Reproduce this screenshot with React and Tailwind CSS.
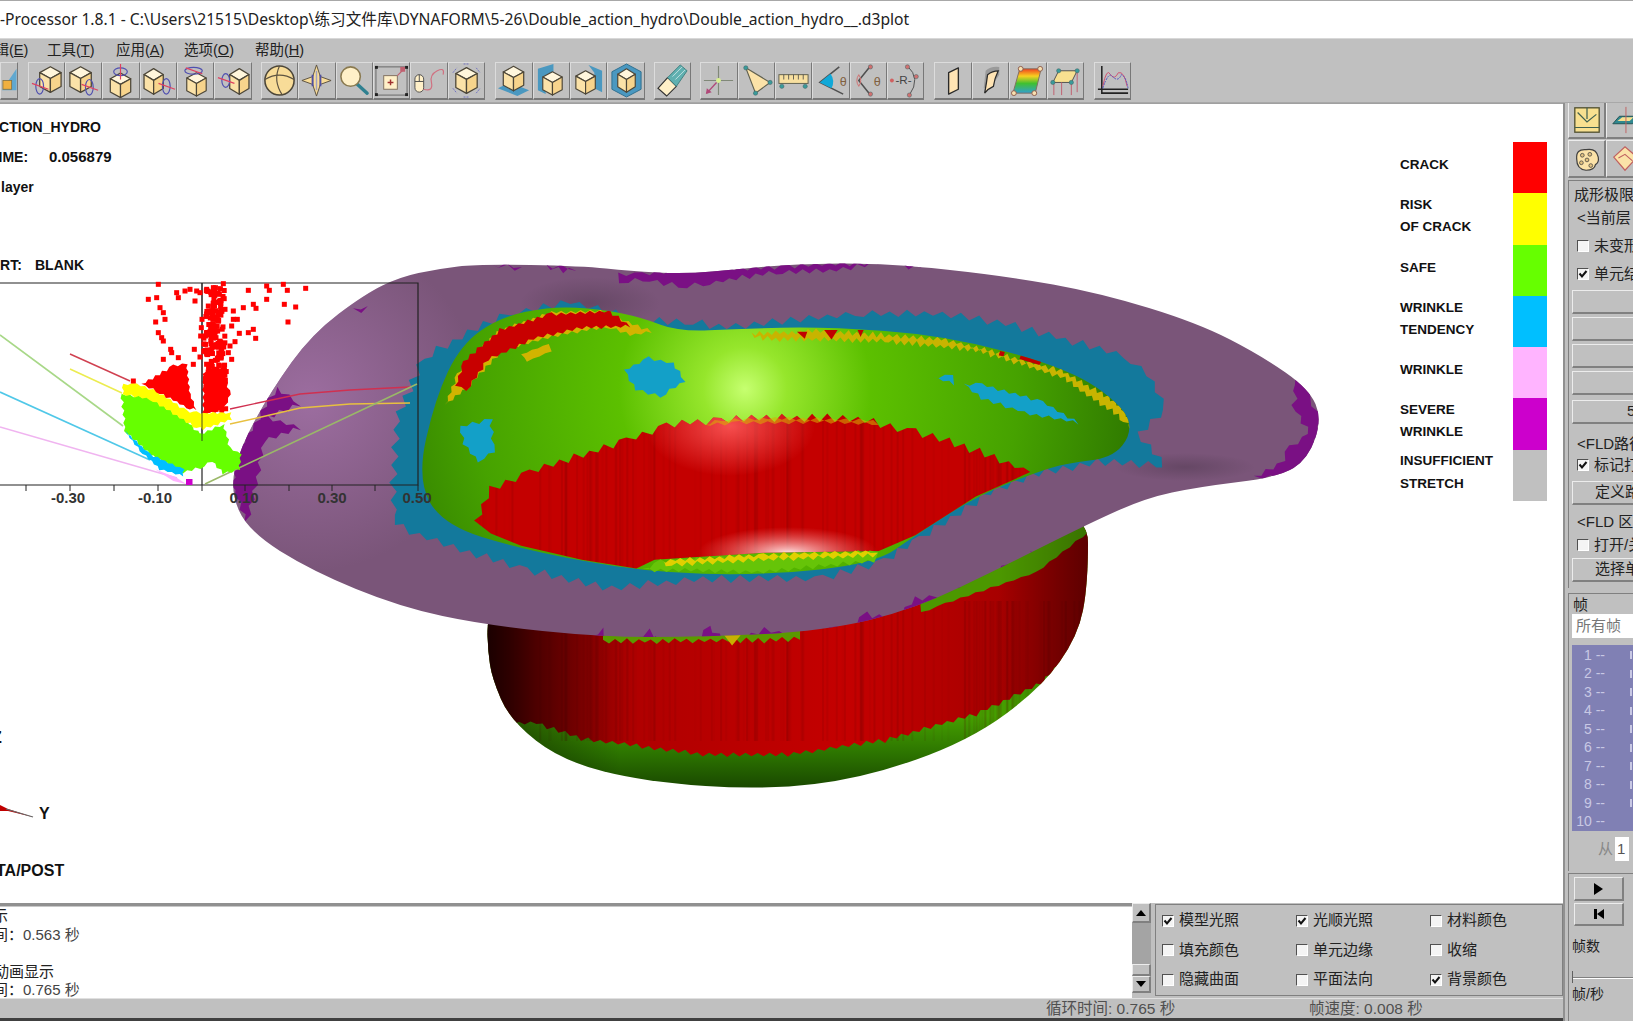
import React from "react"

// zoom crop coordinates -> page coordinates
const z = (pts) => pts.map(([x, y]) => [400 + x / 1.65, 250 + y / 2.85])
const c = (pts) => pts.map(([x, y]) => [x / 3, 100 + y / 3])

const rng = (seed) => {
  let s = seed
  return () => {
    s = (s * 16807) % 2147483647
    return (s - 1) / 2147483646
  }
}

const poly = (pts) =>
  "M" + pts.map((p) => p[0].toFixed(1) + " " + p[1].toFixed(1)).join("L") + "Z"

// rounded closed outline
const smooth = (pts) => {
  const mid = (a, b) => [(a[0] + b[0]) / 2, (a[1] + b[1]) / 2]
  let d = "M" + mid(pts[pts.length - 1], pts[0]).map((n) => n.toFixed(1)).join(" ")
  pts.forEach((p, i) => {
    const m = mid(p, pts[(i + 1) % pts.length])
    d += `Q${p[0].toFixed(1)} ${p[1].toFixed(1)} ${m[0].toFixed(1)} ${m[1].toFixed(1)}`
  })
  return d + "Z"
}

// saw-tooth the edges of a polygon
const jag = (pts, amp, step, seed = 7, open = false) => {
  const r = rng(seed)
  const out = []
  const n = open ? pts.length - 1 : pts.length
  for (let i = 0; i < n; i++) {
    const a = pts[i]
    const b = pts[(i + 1) % pts.length]
    const len = Math.hypot(b[0] - a[0], b[1] - a[1])
    const count = Math.max(1, Math.round(len / step))
    const nx = -(b[1] - a[1]) / len
    const ny = (b[0] - a[0]) / len
    for (let k = 0; k < count; k++) {
      const t = k / count
      const o = (k % 2 ? 1 : -1) * amp * (0.4 + r() * 0.6)
      out.push([a[0] + (b[0] - a[0]) * t + nx * o, a[1] + (b[1] - a[1]) * t + ny * o])
    }
  }
  if (open) out.push(pts[pts.length - 1])
  return out
}

const brimPts = [
  [400, 276], [437, 268], [479, 263], [582, 265], [630, 270], [685, 273], [740, 268], [794, 263],
  [885, 262], [1006, 275], [1100, 292], [1198, 322], [1262, 355], [1309, 388], [1322, 418],
  [1308, 458], [1279, 476], [1198, 486], [1146, 497], [1090, 522], [1006, 564], [915, 608],
  [824, 630], [703, 636], [600, 636], [485, 624], [400, 606], [312, 570], [248, 530], [230, 489],
  [240, 447], [271, 390], [312, 333], [365, 293],
]

const blueBand = [
  [423, 357], [396, 420], [392, 517], [402, 527], [436, 541], [527, 569], [612, 587],
  [703, 578], [824, 578], [885, 559], [921, 538], [982, 496], [1030, 475], [1097, 460],
  [1165, 464], [1139, 432], [1165, 408], [1148, 373], [1124, 355], [1006, 322], [933, 312],
  [855, 313], [727, 326], [685, 320], [642, 319], [570, 301], [509, 312], [461, 336],
]

const bowl = z([
  [250, 158], [330, 165], [400, 190], [460, 230], [560, 222], [700, 216], [900, 240],
  [1105, 335], [1195, 445], [1208, 520], [1175, 590], [1100, 605], [1050, 630], [950, 700],
  [850, 810], [785, 890], [600, 925], [400, 915], [200, 850], [70, 780], [28, 650],
  [58, 420], [100, 268], [165, 188],
])

const redTop = jag(z([[125, 770], [150, 680], [215, 630], [375, 540], [440, 495], [530, 482], [630, 476], [730, 476], [780, 488], [850, 515], [905, 540], [1040, 630]]), 4.5, 8, 11, true)
const redBowl = [...redTop, ...z([[950, 700], [850, 810], [790, 855], [600, 860], [420, 880], [390, 905], [300, 880], [200, 840], [150, 805]])]

const bodyPts = [
  [487, 620], [488, 650], [492, 677], [510, 719], [562, 760], [646, 781], [765, 789], [864, 777],
  [969, 740], [1041, 687], [1078, 635], [1088, 583], [1088, 500], [900, 500], [500, 560],
]
const wallRed = [
  ...z([[100, 900], [1140, 700], [1140, 1100]]),
  ...jag(z([[1130, 1100], [1060, 1230], [950, 1320], [800, 1395], [640, 1435], [500, 1435], [300, 1390], [225, 1345], [100, 1345]]), 2.5, 6, 5, true),
]

const toothRow = jag(z([[335, 1112], [660, 1108]]), 3.5, 6, 3, true)

const purple = [
  z([[360, 65], [400, 65], [470, 50], [540, 50], [640, 45], [730, 35], [790, 35], [720, 55], [620, 60], [500, 95], [460, 100], [400, 80], [365, 90]]),
  z([[150, 40], [200, 42], [190, 50]]),
  z([[240, 40], [290, 50], [270, 60]]),
  z([[830, 40], [860, 42], [840, 50]]),
  z([[1470, 335], [1495, 360], [1500, 420], [1518, 480], [1510, 560], [1490, 620], [1450, 645], [1410, 645], [1450, 610], [1470, 560], [1500, 520], [1475, 440], [1480, 380]]),
  // lower edge clumps
  z([[318, 1100], [332, 1078], [345, 1105]]),
  z([[390, 1105], [410, 1082], [432, 1105]]),
  z([[488, 1108], [510, 1072], [532, 1108]]),
  z([[560, 1104], [600, 1080], [650, 1096]]),
  z([[690, 1090], [720, 1075], [735, 1085]]),
  z([[740, 1078], [770, 1035], [800, 1045], [790, 1066]]),
  z([[820, 1046], [850, 990], [885, 985], [865, 1030]]),
  z([[920, 962], [945, 945], [940, 968]]),
  z([[975, 930], [1005, 890], [1000, 915]]),
  z([[1040, 860], [1065, 850], [1050, 868]]),
  c([[830, 860], [900, 910], [800, 950], [900, 980], [790, 1020], [770, 1150], [740, 1260], [695, 1150], [720, 1040]]),
  c([[1060, 625], [1100, 612], [1085, 630]]),
]

const bluePatches = [
  z([[370, 340], [410, 305], [450, 320], [470, 370], [430, 415], [390, 395]]),
  z([[100, 500], [150, 480], [155, 570], [130, 600], [105, 550]]),
  z([[930, 380], [960, 380], [1060, 430], [1120, 490], [1040, 465], [960, 420]]),
  z([[878, 360], [910, 355], [915, 378]]),
]

const scatter = [
  [475, 550], [445, 595], [470, 590], [530, 575], [535, 590], [555, 570], [570, 565], [590, 570], [585, 600], [600, 575],
  [620, 565], [640, 560], [670, 548], [745, 568], [800, 555], [808, 568], [850, 550], [862, 568], [917, 562], [800, 595],
  [730, 620], [760, 610], [768, 622], [700, 630], [853, 610], [887, 618], [864, 663], [480, 620], [490, 635], [495, 655],
  [467, 663], [475, 695], [485, 710], [490, 720], [512, 745], [515, 755], [535, 770], [490, 775], [583, 745], [600, 768],
  [606, 655], [604, 680], [602, 705], [700, 655], [712, 655], [695, 675], [718, 697], [745, 695], [760, 685], [767, 712],
  [705, 722], [690, 735], [685, 755], [695, 775], [675, 625], [580, 790], [400, 840],
]
const r1 = rng(42)
for (let i = 0; i < 200; i++) {
  const y = 560 + r1() * 370
  const spread = y < 700 ? 28 : 34
  scatter.push([645 + (r1() - 0.5) * 2 * spread, y])
}
const stripesR = rng(9)
const stripes = Array.from({ length: 140 }, () => [480 + stripesR() * 610, stripesR() * 0.16])

const Hat = () => (
  <svg viewBox="0 103 1563 800" className="absolute inset-0 w-[1563px] h-[800px]">
    <defs>
      <linearGradient id="wall" gradientUnits="userSpaceOnUse" x1="488" y1="0" x2="1088" y2="0">
        <stop offset="0" stopColor="#3c0000" />
        <stop offset="0.08" stopColor="#760000" />
        <stop offset="0.25" stopColor="#b00000" />
        <stop offset="0.6" stopColor="#c40000" />
        <stop offset="0.85" stopColor="#a80000" />
        <stop offset="1" stopColor="#7c0000" />
      </linearGradient>
      <linearGradient id="base" gradientUnits="userSpaceOnUse" x1="0" y1="715" x2="0" y2="790">
        <stop offset="0" stopColor="#46a000" />
        <stop offset="0.5" stopColor="#2c7400" />
        <stop offset="1" stopColor="#184400" />
      </linearGradient>
      <linearGradient id="sideDark" gradientUnits="userSpaceOnUse" x1="488" y1="0" x2="1088" y2="0">
        <stop offset="0" stopColor="#000" stopOpacity="0.55" />
        <stop offset="0.22" stopColor="#000" stopOpacity="0" />
        <stop offset="0.85" stopColor="#000" stopOpacity="0" />
        <stop offset="1" stopColor="#000" stopOpacity="0.25" />
      </linearGradient>
      <radialGradient id="bowlG" gradientUnits="userSpaceOnUse" cx="745" cy="388" r="420">
        <stop offset="0" stopColor="#c6ff70" />
        <stop offset="0.1" stopColor="#96e62c" />
        <stop offset="0.3" stopColor="#5cc000" />
        <stop offset="0.65" stopColor="#46a200" />
        <stop offset="1" stopColor="#2a7000" />
      </radialGradient>
      <radialGradient id="brimHi" gradientUnits="userSpaceOnUse" cx="310" cy="400" r="170">
        <stop offset="0" stopColor="#a070a4" stopOpacity="0.9" />
        <stop offset="1" stopColor="#a070a4" stopOpacity="0" />
      </radialGradient>
      <radialGradient id="dark">
        <stop offset="0" stopColor="#3a2a3a" stopOpacity="0.32" />
        <stop offset="1" stopColor="#3a2a3a" stopOpacity="0" />
      </radialGradient>
      <radialGradient id="hot">
        <stop offset="0" stopColor="#ff5c5c" stopOpacity="0.85" />
        <stop offset="1" stopColor="#ff5c5c" stopOpacity="0" />
      </radialGradient>
      <radialGradient id="white">
        <stop offset="0" stopColor="#ffe0e0" />
        <stop offset="1" stopColor="#ff8080" stopOpacity="0" />
      </radialGradient>
      <clipPath id="brimClip"><path d={smooth(brimPts)} /></clipPath>
      <clipPath id="bodyClip"><path d={smooth(bodyPts)} /></clipPath>
      <clipPath id="redClip"><path d={poly(redBowl)} /></clipPath>
      <clipPath id="bowlClip"><path d={smooth(bowl)} /></clipPath>
    </defs>

    <path d={smooth(bodyPts)} fill="url(#base)" />
    <g clipPath="url(#bodyClip)">
      <path d={poly(wallRed)} fill="url(#wall)" />
      {stripes.map(([x, o], i) => (
        <line key={i} x1={x} y1="600" x2={x} y2="740" stroke="#500000" strokeOpacity={o} strokeWidth="2" />
      ))}
      <path d={poly(jag(z([[860, 1030], [900, 1005], [1050, 915], [1137, 800], [1137, 700], [860, 900]]), 1, 8, 4))} fill="#4c9800" />
      <rect x="480" y="500" width="620" height="300" fill="url(#sideDark)" />
    </g>
    <path d={poly([...z([[335, 1075], [660, 1075]]), ...toothRow.slice().reverse()])} fill="#5a9a00" />
    <path d={poly(z([[535, 1095], [562, 1095], [548, 1124]]))} fill="#c8b000" />

    <path d={smooth(brimPts)} fill="#7a5579" />
    <g clipPath="url(#brimClip)">
      <rect x="230" y="260" width="340" height="340" fill="url(#brimHi)" />
      <ellipse cx="590" cy="302" rx="70" ry="26" fill="url(#dark)" />
      <ellipse cx="1185" cy="466" rx="70" ry="14" fill="url(#dark)" />
      {purple.map((p, i) => (
        <path key={i} d={poly(jag(p, 3, 7, 20 + i))} fill="#7a1084" />
      ))}
    </g>

    <path d={poly(jag(blueBand, 4.5, 9, 13))} fill="#13799c" />
    <path d={smooth(bowl)} fill="url(#bowlG)" />
    <g clipPath="url(#bowlClip)">
      <path d={poly(jag(z([[75, 440], [95, 350], [160, 230], [250, 175], [330, 170], [415, 230], [380, 240], [340, 215], [260, 240], [170, 280], [110, 390]]), 2, 5, 31))} fill="#d2b400" />
      <path d={poly(jag(z([[92, 385], [105, 315], [165, 225], [250, 180], [345, 172], [380, 215], [300, 218], [220, 250], [145, 310], [110, 395]]), 2, 5, 32))} fill="#c80000" />
      <path d={poly(jag(z([[200, 295], [245, 265], [250, 285], [210, 315]]), 0.6, 6, 33))} fill="#d2b400" />
      <path d={poly(jag(z([[580, 236], [700, 228], [900, 252], [1090, 340], [1190, 440], [1215, 520], [1190, 475], [1090, 358], [950, 282], [800, 256], [600, 250]]), 3, 4, 34))} fill="#c8b400" />
      <path d={poly(z([[1025, 295], [1060, 310], [1055, 325], [1022, 308]]))} fill="#c00000" />
      <path d={poly(z([[990, 285], [998, 288], [996, 300], [988, 298]]))} fill="#c00000" />
      <path d={poly(z([[655, 230], [672, 230], [668, 250]]))} fill="#c00000" />
      <path d={poly(z([[700, 225], [722, 225], [712, 252]]))} fill="#c00000" />
      <path d={poly(z([[755, 225], [765, 225], [760, 245]]))} fill="#c00000" />
      {bluePatches.map((p, i) => (
        <path key={i} d={poly(jag(p, 2, 6, 40 + i))} fill="#13a0c8" />
      ))}
    </g>
    <path d={poly(redBowl)} fill="#c40000" />
    <g clipPath="url(#redClip)">
      {stripes.map(([x, o], i) => (
        <line key={i} x1={x} y1="400" x2={x} y2="570" stroke="#600000" strokeOpacity={o} strokeWidth="2" />
      ))}
      <ellipse cx="730" cy="425" rx="85" ry="50" fill="url(#hot)" />
      <ellipse cx="788" cy="552" rx="90" ry="26" fill="url(#white)" />
    </g>
    <path d={poly(jag(z([[400, 908], [430, 885], [600, 868], [785, 858], [782, 882], [600, 915]]), 2.5, 6, 52))} fill="#66c408" />
    <path d={poly(jag(z([[430, 882], [600, 866], [785, 856], [780, 868], [600, 880], [440, 895]]), 2.5, 5, 53))} fill="#e0d000" />
    <path d={poly(jag(z([[500, 497], [560, 490], [700, 487], [790, 492], [770, 482], [630, 476], [530, 480]]), 2, 7, 54))} fill="#d8b000" fillOpacity="0.55" />
  </svg>
)

const Chart = () => (
  <svg viewBox="0 103 1563 800" className="absolute inset-0 w-[1563px] h-[800px]">
    <path d="M0 282H418V484H0" fill="none" stroke="#222" strokeWidth="1.2" />
    <line x1="202" y1="282" x2="202" y2="484" stroke="#222" strokeWidth="1.2" />
    {[26, 70, 114, 158, 202, 245, 289, 332, 375, 418].map((x) => (
      <line key={x} x1={x} y1="484" x2={x} y2="490" stroke="#222" />
    ))}
    <polyline points="70,353 130,380" fill="none" stroke="#d04050" strokeWidth="1.4" />
    <polyline points="230,408 267,400 300,393 350,389 410,386" fill="none" stroke="#d03050" strokeWidth="1.4" />
    <polyline points="70,368 122,392" fill="none" stroke="#ecec50" strokeWidth="1.6" />
    <polyline points="230,423 257,417 300,407 350,403 410,402" fill="none" stroke="#e8c040" strokeWidth="1.4" />
    <polyline points="0,334 123,425" fill="none" stroke="#a8d888" strokeWidth="1.6" />
    <polyline points="205,483 417,383" fill="none" stroke="#9ab868" strokeWidth="1.6" />
    <polyline points="0,391 150,459" fill="none" stroke="#50c8e8" strokeWidth="1.6" />
    <polyline points="0,426 177,477" fill="none" stroke="#f0b4f0" strokeWidth="1.6" />
    <path d={poly(jag(c([[365, 880], [450, 890], [560, 960], [600, 1000], [670, 970], [690, 1040], [722, 1060], [720, 1105], [670, 1118], [635, 1080], [600, 1100], [550, 1115], [450, 1060], [375, 990]]), 1.5, 4, 61))} fill="#66ff00" />
    <path d={poly(jag(c([[370, 850], [410, 850], [470, 870], [560, 930], [590, 935], [690, 935], [695, 955], [610, 985], [580, 975], [540, 950], [450, 895], [370, 880]]), 1.5, 4, 62))} fill="#ffff00" />
    <path d={poly(jag(c([[425, 850], [520, 795], [560, 790], [570, 880], [590, 925], [560, 920], [470, 870]]), 1.5, 4, 63))} fill="#ff0000" />
    <path d={poly(jag(c([[620, 800], [670, 800], [690, 880], [670, 930], [610, 935], [610, 820]]), 1.5, 4, 64))} fill="#ff0000" />
    <path d={poly(jag(c([[375, 990], [450, 1060], [550, 1105], [550, 1125], [480, 1105], [420, 1050]]), 1.2, 4, 65))} fill="#00bfff" />
    <path d={poly(c([[465, 1105], [530, 1130], [560, 1150], [520, 1140]]))} fill="#ffb4ff" />
    <rect x="186" y="478" width="6.5" height="6" fill="#cc00cc" />
    <line x1="202" y1="282" x2="202" y2="440" stroke="#222" strokeWidth="0.8" />
    {scatter.map(([x, y], i) => (
      <rect key={i} x={x / 3 - 2.5} y={100 + y / 3 - 2.5} width="5" height="5" fill="#ff0000" />
    ))}
    <path d="M0 804L8 808L33 816L8 810L0 810Z" fill="#c00000" />
    <line x1="6" y1="808" x2="33" y2="816" stroke="#666" strokeWidth="1.2" />
  </svg>
)

const Cube = ({ x = 18, y = 18, s = 1, w = 10 }) => (
  <g transform={`translate(${x} ${y}) scale(${s})`} stroke="#4c4638" strokeWidth="1.2" strokeLinejoin="round">
    <path d={`M0 -12L${w} -6.5L0 -1L${-w} -6.5Z`} fill="#fff6dc" />
    <path d={`M${-w} -6.5L0 -1V12L${-w} 6.5Z`} fill="#fbe2a8" />
    <path d={`M${w} -6.5L0 -1V12L${w} 6.5Z`} fill="#f7d48c" />
  </g>
)
const Ring = ({ x, y, rx, ry, v }) => (
  <g fill="none">
    <ellipse cx={x} cy={y} rx={rx} ry={ry} stroke="#5050b0" strokeWidth="1.2" />
    {v ? (
      <line x1={x} y1={y - 8} x2={x} y2={y + 8} stroke="#e04060" strokeWidth="1.2" />
    ) : (
      <line x1={x - 8} y1={y - 3} x2={x + 9} y2={y + 3} stroke="#e04060" strokeWidth="1.2" />
    )}
  </g>
)
const Node = ({ x, y, f = "#3a9a9a" }) => <circle cx={x} cy={y} r="2.2" fill={f} stroke="#406060" strokeWidth="0.5" />

const icons = [
  <g key="a"><path d="M2 28L17 6V28Z" fill="#60a8d0" /><rect x="3" y="18" width="9" height="9" fill="#f0b040" stroke="#807040" strokeWidth="0.8" /></g>,
  <g key="b"><Cube x={22} y={17} s={1.1} /><Ring x={11} y={24} rx={4} ry={8} /></g>,
  <g key="c"><Cube x={15} y={17} s={1.1} /><Ring x={24} y={25} rx={4} ry={8} /></g>,
  <g key="d"><Cube x={18} y={23} s={1.05} /><Ring x={18} y={9} rx={7} ry={4} v /></g>,
  <g key="e"><Cube x={13} y={19} w={9} s={1.1} /><Ring x={26} y={24} rx={4} ry={8} /></g>,
  <g key="f"><Cube x={19} y={22} w={10} /><Ring x={16} y={8} rx={9} ry={3.5} /></g>,
  <g key="g"><Cube x={24} y={19} w={9} s={1.1} /><Ring x={10} y={18} rx={4} ry={7} /></g>,
  <g key="h"><circle cx="18" cy="18" r="15" fill="#f8dc98" stroke="#4c4638" strokeWidth="1.6" /><path d="M3 17Q18 8 33 17M18 3Q11 18 21 33" fill="none" stroke="#5c5240" strokeWidth="1.2" /></g>,
  <g key="i"><path d="M18 2L22 14L33 18L22 22L18 34L14 22L3 18L14 14Z" fill="#f8dc98" stroke="#5c5240" /><path d="M14 12V24M22 12V24" stroke="#5050a0" strokeWidth="2" /><path d="M18 8V28" stroke="#a0a0c0" strokeWidth="1.5" /></g>,
  <g key="j"><line x1="20" y1="21" x2="31" y2="31" stroke="#2f8090" strokeWidth="3.5" strokeLinecap="round" /><circle cx="14" cy="14" r="10" fill="#fff0c8" stroke="#8a7a50" strokeWidth="1.6" /></g>,
  <g key="k"><path d="M2 4H34V33H2Z" fill="none" stroke="#505050" strokeWidth="0.8" /><rect x="10" y="13" width="14" height="14" fill="#fff0c8" stroke="#807060" /><path d="M17 17V23M14 20H20" stroke="#a03030" strokeWidth="1.5" /><path d="M24 13L30 7" stroke="#c06070" strokeWidth="1.2" /><rect x="27" y="4" width="5" height="5" fill="#c06070" /><g fill="#222"><rect x="1" y="3" width="3" height="3" /><rect x="32" y="3" width="3" height="3" /><rect x="1" y="31" width="3" height="3" /><rect x="32" y="31" width="3" height="3" /></g></g>,
  <g key="l"><rect x="3" y="12" width="9" height="18" rx="4.5" fill="#fff0c8" stroke="#505050" /><path d="M7.5 12V19M3 19H12" stroke="#505050" /><path d="M12 27Q22 30 20 20Q18 12 26 8Q34 4 32 12" fill="none" stroke="#d07080" strokeWidth="1.2" /></g>,
  <g key="m"><Cube x={18} y={18} s={1.1} /><path d="M4 10L8 5M28 5L32 10M4 26L8 31M28 31L32 26M15 1H21M15 35H21" stroke="#7070c0" strokeDasharray="2 1" fill="none" /></g>,
  <g key="n"><path d="M2 26L14 20L34 28L22 34Z" fill="#4a98c0" /><Cube x={18} y={16} s={1.05} /></g>,
  <g key="o"><path d="M4 6L20 1V12L12 18V32L4 28Z" fill="#4a98c0" /><Cube x={19} y={21} w={10} /></g>,
  <g key="p"><path d="M18 2L32 8V30L24 26V10Z" fill="#4a98c0" /><Cube x={15} y={20} w={10} /></g>,
  <g key="q"><path d="M18 1L33 9V27L18 35L3 27V9Z" fill="#4a98c0" stroke="#307090" /><Cube x={18} y={18} w={9} /></g>,
  <g key="r"><path d="M3 26L13 15L22 24L12 34Z" fill="#fff0c8" stroke="#303030" strokeWidth="1.2" /><path d="M13 15L26 2L33 8L22 24Z" fill="#60b0b0" stroke="#408080" /><path d="M18 14L28 4M21 17L31 7" stroke="#c0e0e0" /></g>,
  <g key="s"><path d="M18 3V33M3 18H33" stroke="#808878" strokeWidth="1.2" /><circle cx="18" cy="18" r="2.5" fill="#d8f090" /><path d="M6 31L16 20" stroke="#b04878" strokeWidth="1.4" /><path d="M5 32L6 26L11 30Z" fill="#b04878" /></g>,
  <g key="t"><path d="M7 5L32 20L17 31Z" fill="#fbe2a8" stroke="#606050" strokeWidth="1.2" /><Node x={7} y={5} /><Node x={32} y={20} /><Node x={17} y={31} /></g>,
  <g key="u"><rect x="3" y="12" width="30" height="9" fill="#f8e0a0" stroke="#606050" /><path d="M8 12V17M13 12V17M18 12V17M23 12V17M28 12V17" stroke="#404040" strokeWidth="0.8" /><Node x={6} y={24} /><Node x={30} y={24} /></g>,
  <g key="v"><path d="M26 4L6 20L30 32" fill="none" stroke="#505050" strokeWidth="1.6" /><path d="M6 20L17 11Q22 18 18 26Z" fill="#10a8d8" /><text x="30" y="24" fontSize="13" textAnchor="middle" fill="#806040" fontFamily="Liberation Sans">θ</text></g>,
  <g key="w"><path d="M20 3L8 18L20 33" fill="none" stroke="#505050" strokeWidth="1.6" /><path d="M8 12Q4 18 8 24M8 12Q12 18 8 24" fill="none" stroke="#d07070" /><Node x={20} y={4} f="#d07070" /><Node x={20} y={32} f="#d07070" /><text x="27" y="24" fontSize="13" textAnchor="middle" fill="#806040" fontFamily="Liberation Sans">θ</text></g>,
  <g key="x"><path d="M20 3Q34 16 22 33" fill="none" stroke="#505050" /><circle cx="4" cy="18" r="2" fill="#d06060" /><Node x={20} y={4} f="#d07070" /><Node x={29} y={14} f="#d07070" /><Node x={22} y={33} f="#d07070" /><text x="16" y="22" fontSize="12" textAnchor="middle" fill="#444" fontFamily="Liberation Sans">-R-</text></g>,
  <g key="y"><path d="M13 10L23 5V27L13 32Z" fill="#ffe4b4" stroke="#2a2a2a" strokeWidth="1.4" strokeLinejoin="round" /></g>,
  <g key="z"><path d="M13 8Q18 3 27 4V12Q22 20 20 22L11 26Z" fill="#9a9a9a" /><path d="M15 12Q20 8 26 8Q22 16 21 24Q16 26 12 31Q14 20 15 12Z" fill="#ffe4b4" stroke="#2a2a2a" strokeWidth="1.3" /></g>,
  <g key="aa"><path d="M10 6H32L26 31H3Z" fill="url(#rainbow)" stroke="#807060" /><circle cx="11" cy="6" r="2.5" fill="#f8e0b0" stroke="#906050" /><circle cx="31" cy="6" r="2.5" fill="#f8e0b0" stroke="#906050" /><circle cx="4" cy="31" r="2.5" fill="#f8e0b0" stroke="#906050" /><circle cx="25" cy="31" r="2.5" fill="#f8e0b0" stroke="#906050" /></g>,
  <g key="ab"><path d="M11 8H30L24 20H5Z" fill="#f8e090" stroke="#505050" /><path d="M6 20V33M14 20V33M24 20V33M30 8V30" stroke="#c06070" /><Node x={11} y={8} /><Node x={30} y={8} /><Node x={5} y={20} /><Node x={24} y={20} /></g>,
  <g key="ac"><path d="M7 3V31H34M3 27H34" fill="none" stroke="#222" strokeWidth="1.6" /><path d="M8 24Q12 4 16 12Q20 18 24 10Q30 8 33 24" fill="none" stroke="#d05070" /><path d="M8 26Q14 8 18 14Q24 20 27 12Q32 14 34 26" fill="none" stroke="#5050c0" strokeDasharray="2 1" /></g>,
]

const TbBtn = ({ icon, narrow }) => (
  <div className={`shrink-0 h-[38px] overflow-hidden flex items-center justify-center border-t border-l border-r border-b-2 border-t-[#dcdcdc] border-l-[#dcdcdc] border-r-[#787878] border-b-[#787878] ${narrow ? "w-[18px]" : "w-[37.4px]"}`}>
    <svg viewBox={narrow ? "0 0 18 36" : "0 0 36 36"} className={`shrink-0 h-[35px] ${narrow ? "w-[17.5px]" : "w-[35px]"}`}>
      <defs>
        <linearGradient id="rainbow" x1="0" y1="0" x2="0" y2="1">
          <stop offset="0" stopColor="#f04020" />
          <stop offset="0.3" stopColor="#f8d020" />
          <stop offset="0.6" stopColor="#40c030" />
          <stop offset="1" stopColor="#30a0d0" />
        </linearGradient>
      </defs>
      {icon}
    </svg>
  </div>
)

const Toolbar = () => (
  <div className="h-[41px] flex items-start shrink-0 border-b border-b-[#a8a8a8]">
    <TbBtn narrow icon={icons[0]} />
    <div className="flex ml-[9.5px]">{icons.slice(1, 7).map((ic, i) => <TbBtn key={i} icon={ic} />)}</div>
    <div className="flex ml-[9px]">{icons.slice(7, 13).map((ic, i) => <TbBtn key={i} icon={ic} />)}</div>
    <div className="flex ml-[10px]">{icons.slice(13, 17).map((ic, i) => <TbBtn key={i} icon={ic} />)}</div>
    <div className="flex ml-[9px]"><TbBtn icon={icons[17]} /></div>
    <div className="flex ml-[9px]">{icons.slice(18, 24).map((ic, i) => <TbBtn key={i} icon={ic} />)}</div>
    <div className="flex ml-[10px]">{icons.slice(24, 28).map((ic, i) => <TbBtn key={i} icon={ic} />)}</div>
    <div className="flex ml-[10px]"><TbBtn icon={icons[28]} /></div>
  </div>
)

const Check = ({ on }) => (
  <span className="shrink-0 w-[12px] h-[12px] flex items-center justify-center bg-[#f4f4f4] border-t border-l border-t-[#505050] border-l-[#505050] border-r border-b border-r-white border-b-white">
    {on && (
      <svg viewBox="0 0 10 10" className="w-[10px] h-[10px]">
        <path d="M1.5 4.5L4 7.5L8.5 2" fill="none" stroke="#111" strokeWidth="2" />
      </svg>
    )}
  </span>
)

const Bevel = "border-t border-l border-r-2 border-b-2 border-t-[#ececec] border-l-[#ececec] border-r-[#808080] border-b-[#808080]"

const legendLabels = [
  ["CRACK", "top-[52px]"],
  ["RISK", "top-[92px]"],
  ["OF CRACK", "top-[114px]"],
  ["SAFE", "top-[155px]"],
  ["WRINKLE", "top-[195px]"],
  ["TENDENCY", "top-[217px]"],
  ["WRINKLE", "top-[257px]"],
  ["SEVERE", "top-[297px]"],
  ["WRINKLE", "top-[319px]"],
  ["INSUFFICIENT", "top-[348px]"],
  ["STRETCH", "top-[371px]"],
]
const legendColors = ["bg-[#ff0000]", "bg-[#ffff00]", "bg-[#66ff00]", "bg-[#00bfff]", "bg-[#ffb4ff]", "bg-[#cc00cc]", "bg-[#c0c0c0]"]

const axisLabels = [
  ["-0.30", "left-[68px]"],
  ["-0.10", "left-[155px]"],
  ["0.10", "left-[244px]"],
  ["0.30", "left-[332px]"],
  ["0.50", "left-[417px]"],
]

const Viewport = () => (
  <div className="relative h-[800px] bg-white overflow-hidden border-t border-t-[#a0a0a0]">
    <Hat />
    <Chart />
    <div className="font-bold text-[14px] leading-[18px] text-[#111]">
      <div className="absolute left-[-11px] top-[14px]">ACTION_HYDRO</div>
      <div className="absolute left-[-10px] top-[44px]">TIME:</div>
      <div className="absolute left-[49px] top-[44px] text-[15px]">0.056879</div>
      <div className="absolute left-[1px] top-[74px]">layer</div>
      <div className="absolute left-[-10px] top-[152px]">ART:</div>
      <div className="absolute left-[35px] top-[152px]">BLANK</div>
      {axisLabels.map(([t, pos]) => (
        <div key={t} className={`absolute top-[385px] -translate-x-1/2 text-[15px] text-[#333] ${pos}`}>{t}</div>
      ))}
      <div className="absolute left-[-8px] top-[625px] text-[16px]">Z</div>
      <div className="absolute left-[39px] top-[701px] text-[16px]">Y</div>
      <div className="absolute left-[-4px] top-[758px] text-[16px]">TA/POST</div>
      {legendLabels.map(([t, pos], i) => (
        <div key={i} className={`absolute left-[1400px] text-[13.5px] ${pos}`}>{t}</div>
      ))}
    </div>
    <div className="absolute left-[1513px] top-[38px] w-[34px] flex flex-col">
      {legendColors.map((col) => (
        <div key={col} className={`h-[51.3px] ${col}`} />
      ))}
    </div>
  </div>
)

const Options = () => {
  const items = [
    ["模型光照", true], ["光顺光照", true], ["材料颜色", false],
    ["填充颜色", false], ["单元边缘", false], ["收缩", false],
    ["隐藏曲面", false], ["平面法向", false], ["背景颜色", true],
  ]
  return (
    <div className="ml-[4px] mt-[1px] w-[408px] h-[92px] grid grid-cols-[134px_134px_134px] content-center pl-[6px] border border-[#808080]">
      {items.map(([t, on]) => (
        <div key={t} className="h-[29.5px] flex items-center gap-[5px] text-[15px] text-[#222]">
          <Check on={on} />
          <span>{t}</span>
        </div>
      ))}
    </div>
  )
}

const Scrollbar = () => (
  <div className="w-[19px] h-[90px] flex flex-col">
    <div className={`h-[20px] flex items-center justify-center ${Bevel}`}>
      <div className="border-x-[5px] border-x-transparent border-b-[6px] border-b-black" />
    </div>
    <div className="flex-1 bg-[#a4a4a4]" />
    <div className={`h-[12px] ${Bevel}`} />
    <div className={`h-[17px] flex items-center justify-center ${Bevel}`}>
      <div className="border-x-[5px] border-x-transparent border-t-[6px] border-t-black" />
    </div>
  </div>
)

const Bottom = () => (
  <>
    <div className="h-[95px] flex">
      <div className="w-[1134px] flex flex-col">
        <div className="h-[5px] shrink-0 bg-[#909090] border-b-2 border-b-[#c8c8c8]" />
        <div className="flex-1 bg-white overflow-hidden text-[15px] leading-[18.5px] text-[#222] pt-0 -mt-[1px]">
          <div className="ml-[-7px]">示</div>
          <div className="ml-[-7px]">间：<span className="text-[#444]">0.563 秒</span></div>
          <div className="h-[18.5px]" />
          <div className="ml-[-6px]">动画显示</div>
          <div className="ml-[-7px]">间：<span className="text-[#444]">0.765 秒</span></div>
        </div>
      </div>
      <Scrollbar />
      <Options />
    </div>
    <div className="h-[20px] flex items-center text-[15.5px] text-[#505050] border-t border-t-[#e0e0e0]">
      <span className="ml-[1046px] w-[263px]">循环时间: 0.765 秒</span>
      <span>帧速度: 0.008 秒</span>
    </div>
    <div className="h-[3px] bg-[#404040]" />
  </>
)

const PanelBtn = ({ label, cls, inner }) => (
  <div className={`w-[120px] h-[24px] flex items-center text-[15px] text-[#222] ${Bevel} ${cls} ${inner}`}>{label}</div>
)

const RightPanel = () => (
  <div className="w-[70px] overflow-hidden text-[15px] text-[#222] border-l-2 border-l-[#909090] pl-[3px]">
    <div className="flex mt-[-1px]">
      <div className={`shrink-0 w-[38px] h-[37px] flex items-center justify-center ${Bevel}`}>
        <svg viewBox="0 0 32 32" className="w-[30px] h-[30px]">
          <rect x="3" y="3" width="26" height="26" fill="#f8e090" stroke="#505030" strokeWidth="1.4" />
          <path d="M3 24H29M16 3V15M6 8L16 18L26 10" fill="none" stroke="#406050" strokeWidth="1.3" />
        </svg>
      </div>
      <div className={`shrink-0 w-[38px] h-[37px] flex items-center justify-center ${Bevel}`}>
        <svg viewBox="0 0 32 32" className="w-[30px] h-[30px]">
          <path d="M3 20L10 12H30L24 20Z" fill="#308890" stroke="#205050" />
          <path d="M8 17L13 13H25L21 17Z" fill="#f8e090" />
          <path d="M17 2V30" stroke="#c06060" />
        </svg>
      </div>
    </div>
    <div className="flex mt-[1px]">
      <div className={`shrink-0 w-[38px] h-[38px] flex items-center justify-center ${Bevel}`}>
        <svg viewBox="0 0 32 32" className="w-[30px] h-[30px]">
          <path d="M5 16Q4 5 15 6Q26 4 28 14Q29 20 25 22Q24 28 15 28Q5 27 5 16Z" fill="#fbe2a8" stroke="#404040" strokeWidth="1.3" />
          <g fill="#e0c080" stroke="#404040" strokeWidth="0.8">
            <circle cx="11" cy="12" r="2" /><circle cx="19" cy="11" r="2" /><circle cx="16" cy="17" r="2" /><circle cx="10" cy="20" r="2" /><circle cx="20" cy="23" r="2" />
          </g>
        </svg>
      </div>
      <div className={`shrink-0 w-[38px] h-[38px] flex items-center justify-center ${Bevel}`}>
        <svg viewBox="0 0 32 32" className="w-[30px] h-[30px]">
          <path d="M4 14L16 3L29 14L16 28Z" fill="#fbe2a8" stroke="#c06060" strokeWidth="1.3" />
          <path d="M9 15L16 11L24 18" fill="none" stroke="#c06060" strokeWidth="1.2" />
        </svg>
      </div>
    </div>

    <div className="w-[120px] h-[408px] mt-[2px] border-t border-l border-[#808080] pl-[3px]">
      <div className="h-[22px] mt-[3px] ml-[2px] leading-[22px] whitespace-nowrap">成形极限图</div>
      <div className="h-[22px] mt-[1px] ml-[5px] leading-[22px] whitespace-nowrap">&lt;当前层</div>
      <div className="h-[26px] mt-[4px] ml-[5px] flex items-center gap-[5px] whitespace-nowrap"><Check /><span>未变形</span></div>
      <div className="h-[26px] mt-[2px] ml-[5px] flex items-center gap-[5px] whitespace-nowrap"><Check on /><span>单元结果</span></div>
      <PanelBtn cls="mt-[3px]" />
      <PanelBtn cls="mt-[3px]" />
      <PanelBtn cls="mt-[3px]" />
      <PanelBtn cls="mt-[3px]" />
      <PanelBtn cls="mt-[5px]" inner="pl-[54px]" label="5" />
      <div className="h-[22px] mt-[9px] ml-[5px] leading-[22px] whitespace-nowrap">&lt;FLD路径</div>
      <div className="h-[20px] ml-[5px] flex items-center gap-[5px] whitespace-nowrap"><Check on /><span>标记打开</span></div>
      <PanelBtn cls="mt-[6px]" inner="pl-[22px] whitespace-nowrap" label="定义路径" />
      <div className="h-[22px] mt-[6px] ml-[5px] leading-[22px] whitespace-nowrap">&lt;FLD 区</div>
      <div className="h-[20px] mt-[2px] ml-[5px] flex items-center gap-[5px] whitespace-nowrap"><Check /><span>打开/关闭</span></div>
      <PanelBtn cls="mt-[3px]" inner="pl-[22px] whitespace-nowrap" label="选择单元" />
    </div>

    <div className="w-[120px] h-[278px] mt-[5px] border-t border-l border-[#808080] pl-[3px]">
      <div className="h-[20px] leading-[22px] ml-[1px]">帧</div>
      <div className="h-[24px] bg-white text-[#777] pl-[4px] leading-[24px]">所有帧</div>
      <div className="h-[186px] mt-[7px] bg-[#8080b4] text-[#c8c8e4] text-[14px] pt-[1px]">
        {["1", "2", "3", "4", "5", "6", "7", "8", "9", "10"].map((n) => (
          <div key={n} className="h-[18.5px] flex items-center">
            <span className="w-[33px] text-right whitespace-nowrap">{n} --</span>
            {n !== "10" && <span className="ml-[25px] w-[2px] h-[8px] bg-[#c8c8e4]" />}
          </div>
        ))}
      </div>
      <div className="h-[24px] mt-[6px] flex items-center">
        <span className="ml-[26px] text-[#888]">从</span>
        <span className="ml-[2px] w-[14px] h-[24px] bg-white text-[#555] pl-[2px] leading-[24px]">1</span>
      </div>
    </div>

    <div className="w-[120px] h-[150px] mt-[2px] border-t border-l border-[#808080] pl-[5px] pt-[3px]">
      <div className={`w-[50px] h-[24px] flex items-center justify-center ${Bevel}`}>
        <div className="border-y-[6px] border-y-transparent border-l-[9px] border-l-black" />
      </div>
      <div className={`w-[50px] h-[23px] mt-[2px] flex items-center justify-center ${Bevel}`}>
        <div className="w-[3px] h-[10px] bg-black" />
        <div className="border-y-[5px] border-y-transparent border-r-[7px] border-r-black" />
      </div>
      <div className="h-[22px] mt-[9px] ml-[-2px] leading-[22px] text-[14px]">帧数</div>
      <div className="relative mt-[20px] ml-[-2px] h-[2px] bg-[#808080] border-b border-b-white">
        <div className="absolute left-0 top-[-6px] w-[1px] h-[12px] bg-[#606060]" />
      </div>
      <div className="h-[22px] mt-[4px] ml-[-2px] leading-[22px] text-[14px]">帧/秒</div>
    </div>
  </div>
)

export default function App() {
  return (
    <div className="w-[1633px] h-[1021px] overflow-hidden bg-[#c0c0c0] flex flex-col font-['Liberation_Sans','Noto_Sans_CJK_SC',sans-serif]">
      <div className="h-[39px] shrink-0 bg-white border-t border-t-[#a8a8a8] border-b border-b-[#d8d8d8] flex items-center whitespace-nowrap text-[15.65px] text-[#222] font-['Noto_Sans','Noto_Sans_CJK_SC',sans-serif]">
        -Processor 1.8.1 - C:\Users\21515\Desktop\练习文件库\DYNAFORM\5-26\Double_action_hydro\Double_action_hydro__.d3plot
      </div>
      <div className="h-[23px] shrink-0 flex items-center text-[14.5px] text-[#222] whitespace-nowrap">
        <span className="ml-[-20px] w-[67px]">编辑(<u>E</u>)</span>
        <span className="w-[69px]">工具(<u>T</u>)</span>
        <span className="w-[68px]">应用(<u>A</u>)</span>
        <span className="w-[71px]">选项(<u>O</u>)</span>
        <span>帮助(<u>H</u>)</span>
      </div>
      <Toolbar />
      <div className="flex-1 flex min-h-0">
        <div className="w-[1563px] flex flex-col">
          <Viewport />
          <Bottom />
        </div>
        <RightPanel />
      </div>
    </div>
  )
}
